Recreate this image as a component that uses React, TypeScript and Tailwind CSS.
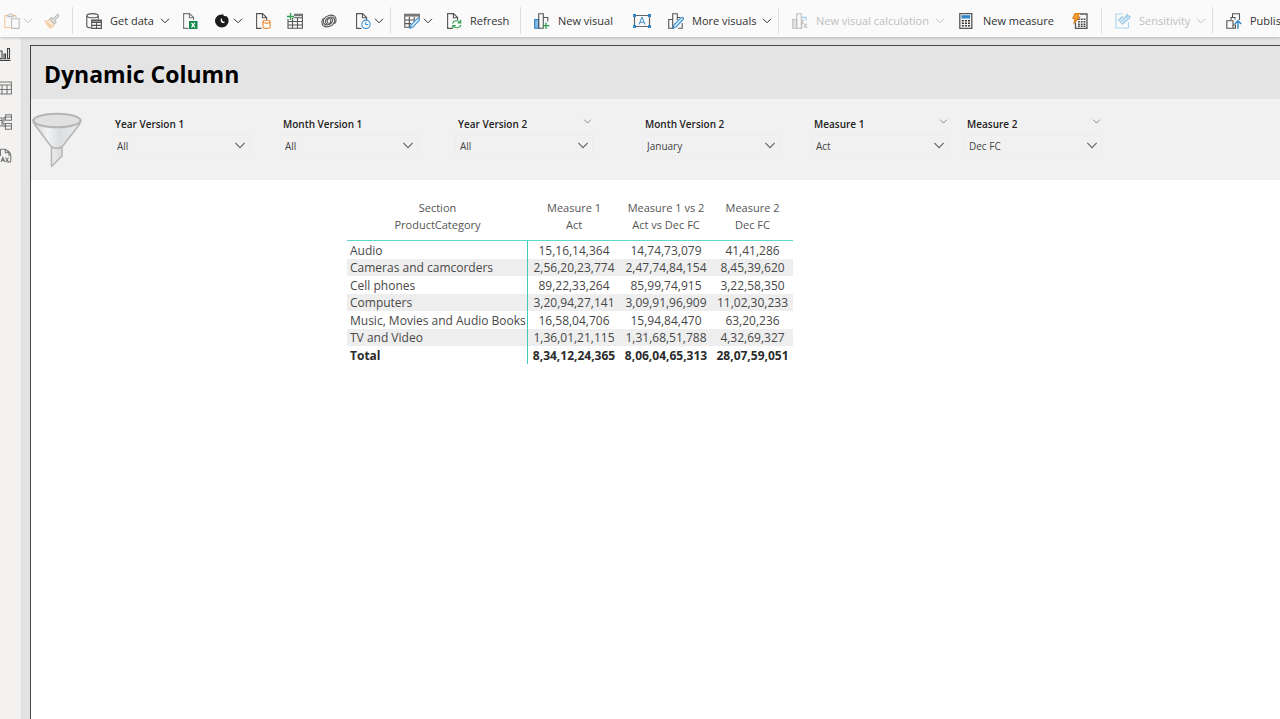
import { ReactNode } from "react";

type IconProps = {
    children: ReactNode;
    className?: string;
};

function Icon({ children, className = "" }: IconProps) {
    return (
        <svg
            viewBox="0 0 16 16"
            className={`h-4 w-4 shrink-0 ${className}`}
            fill="none"
            stroke="#555"
            strokeWidth="1.1"
            aria-hidden="true"
        >
            {children}
        </svg>
    );
}

function Chevron({ className = "h-[6px] w-[10px]" }: { className?: string }) {
    return (
        <svg
            viewBox="0 0 10 6"
            className={`shrink-0 ${className}`}
            fill="none"
            stroke="currentColor"
            aria-hidden="true"
        >
            <path d="M1 .8 5 4.8 9 .8" />
        </svg>
    );
}

const page = "M6.5 15.4H1.6V.6h6l4 4V7M7.4.8v4h4";

const PasteIcon = () => (
    <Icon className="opacity-60">
        <path d="M6.5 14.5H.8V2.6h3M9 2.6h3V5" stroke="#f0a860" />
        <path d="M3.8 3.6V2h1.4a1.3 1.3 0 0 1 2.6 0h1.4v1.6zM7.6 5.8h7.6v9.6H7.6z" stroke="#999" />
    </Icon>
);

const BrushIcon = () => (
    <Icon className="opacity-70">
        <path d="M1 8.2c2 .2 3.6-.5 5-2l4.6 4.6c-1 2-2.6 3.5-4.6 4.3zM3.5 10l4 3.5" stroke="#f0b070" fill="#fbe3c8" />
        <path d="m6 6.2 1.5-1.6 1.7 1.6L13.3 1.6q1.6-.3 1.4 1.4L10.6 7.4l1.5 1.6-1.5 1.7z" stroke="#999" />
    </Icon>
);

const DatabaseIcon = () => (
    <Icon>
        <ellipse cx="6.5" cy="2.7" rx="5.7" ry="2.1" />
        <path d="M.8 2.7v10c0 1.2 2 2 4.2 2.1M12.2 2.7v3.5" />
        <path d="M5.7 7.1h9.7v8.3H5.7zM5.7 9.5h9.7M5.7 12.4h9.7M10.5 9.5v6" />
        <path d="M5.7 7.8h9.7" strokeWidth="1.6" />
    </Icon>
);

const ExcelIcon = () => (
    <Icon>
        <path d={page} stroke="#777" />
        <path d="M7 8h8.5v8H7z" fill="#14874a" stroke="none" />
        <path d="m9.5 9.8 3.4 4.5m0-4.5-3.4 4.5" stroke="#fff" strokeWidth="1.3" />
    </Icon>
);

const OneLakeIcon = () => (
    <Icon>
        <path
            d="M1 8c0-4.500 4.500-7.800 9-6.200l-.6 1.300 3.300.2C14 4.500 14.600 6 14.600 8a6.800 6.500 0 0 1-13.600 0z"
            fill="#1c1c1c"
            stroke="none"
        />
        <path d="M7.300 5C6.300 6.500 6.400 9.300 8.700 10c1.200.2 2-.3 2.300-1.200-1.700.1-3-.8-3-2.300z" fill="#fff" stroke="none" />
    </Icon>
);

const SqlIcon = () => (
    <Icon>
        <path d={page} />
        <path d="M8 8.7v5.500c0 1.500 7 1.500 7 0V8.700" fill="#fff" stroke="#e8872f" />
        <ellipse cx="11.5" cy="8.7" rx="3.5" ry="1.4" fill="#fff" stroke="#e8872f" />
    </Icon>
);

const EnterDataIcon = () => (
    <Icon>
        <path d="M1 6v9.300h14.400V1.200H7M1 8.500h14.400M1 12h14.400M5.500 5v10.300M10.500 5v10.300M6.500 4.800h9" />
        <path d="M7 2.200h8.400" strokeWidth="2" stroke="#777" />
        <path d="M3.500 0v7M0 3.500h7" stroke="#2f9e4f" strokeWidth="1.3" />
    </Icon>
);

const DataverseIcon = () => (
    <Icon>
        <path d="M13.500 3.200C10.500 1 5 2.500 3 6c-1.700 3 0 6 3 6 3.500 0 5.800-2.600 5.500-5C11.200 5 9 4.400 7.500 5.600 6 7 5.600 9 7.200 9.800" />
        <path d="M2.500 12.800C5.500 15 11 13.500 13 10c1.700-3 0-6-3-6-3.500 0-5.800 2.600-5.500 5 .3 2 2.500 2.600 4 1.400C10 9 10.400 7 8.800 6.200" />
        <path d="M2.500 12.800C.500 11 .3 7.500 2.500 5M13.500 3.200c2 1.800 2.200 5.300 0 7.800" />
    </Icon>
);

const RecentIcon = () => (
    <Icon>
        <path d={page} />
        <circle cx="11" cy="11.3" r="4.2" fill="#fff" stroke="#3a8fd0" />
        <path d="M10.800 8.800v2.700h2.400" stroke="#3a8fd0" />
    </Icon>
);

const TransformIcon = () => (
    <Icon>
        <path d="M6 14.300H.8V1.200h14.400V5M.8 7h10M.8 10.600H7M5.300 4v10.300M10.300 4v4" />
        <path d="M.8 2.500h14.400" strokeWidth="2.2" stroke="#777" />
        <path d="m6 15.200 1-3.300 6.700-6.700q1.800-.3 1.800 1.800L9 14z" fill="#d8ecfa" stroke="#3a8fd0" />
    </Icon>
);

const RefreshIcon = () => (
    <Icon>
        <path d={page} />
        <path
            d="M6.500 10.500c.8-3 5.500-3.800 7.800-1M14.700 6.800v3.100h-3M15 12c-.8 3-5.500 3.800-7.800 1M6.800 15.700v-3.100h3"
            stroke="#2f9e4f"
        />
    </Icon>
);

const NewVisualIcon = () => (
    <Icon>
        <path d="M.7 6.500h4v8.700h-4z" fill="#7dbcec" stroke="#2f7fc0" />
        <path d="M4.700 15.200V.8h4.600v14.400zM9.300 4.500h4.500v4" />
        <path d="M12 9.500v6.500M8.800 12.700h6.500" stroke="#2f9e4f" strokeWidth="1.3" />
    </Icon>
);

const TextBoxIcon = () => (
    <svg viewBox="0 0 18 16" className="h-4 w-[18px] shrink-0" fill="none" aria-hidden="true">
        <path d="M1.500 2.500h15v11h-15z" stroke="#666" strokeWidth="1.2" />
        <path d="m6 11.500 3-7.500 3 7.500M7 9.200h4" stroke="#3a8fd0" />
        <path d="M0 1h3v3H0zM15 1h3v3h-3zM0 12h3v3H0zM15 12h3v3h-3z" fill="#2d86c9" />
    </svg>
);

const MoreVisualsIcon = () => (
    <Icon>
        <path d="M4.700 15.200h-4V6.500h4M6 15.200H4.700V.8h4.600V7M9.300 4.500h3M14.200 10v5.200h-4" />
        <path d="m5 15 1.200-3.500 7.500-7.300q2-.2 1.800 1.800L8.300 13.700z" fill="#d8ecfa" stroke="#3a8fd0" />
    </Icon>
);

const VisualCalcIcon = () => (
    <Icon>
        <path d="M.7 6.500h4v8.700h-4z" fill="#e4e4e4" stroke="#c0c0c0" />
        <path d="M4.700 15.200V.8h4.600v14.400z" stroke="#bdbdbd" />
        <path d="M9.300 4.500H14v3" stroke="#a8d0ee" strokeWidth="1.4" />
        <path
            d="M12 7c-2-.5-1.500 2-2.500 8.500-.3.500-1 .5-1.500.3M8.800 10h2.800M12 10.500l3 4.500m0-4.500-3.200 4.500"
            stroke="#bdbdbd"
        />
    </Icon>
);

const CalculatorIcon = () => (
    <Icon>
        <path d="M.8.700h12v14.600h-12z" strokeWidth="1.3" />
        <path d="M3 2.700h7.600v2.200H3z" fill="#2d86c9" stroke="#2d86c9" />
        <path
            d="M2.800 7.800h8.200M2.800 10.300h8.200M2.800 12.800h8.200"
            stroke="#333"
            strokeWidth="1.5"
            strokeDasharray="2 1.1"
        />
    </Icon>
);

const QuickMeasureIcon = () => (
    <Icon>
        <path d="M8 1h7v14.300H3.500V9.500" strokeWidth="1.3" />
        <path
            d="M6 6.300h7.500M6 8.800h7.500M6 11.200h7.500M6 13.300h7.500"
            stroke="#444"
            strokeWidth="1.5"
            strokeDasharray="1.8 1"
        />
        <path d="M3 .500h4.500L5.500 4h2.200L2 10l1-4.500H.8z" fill="#f5a133" stroke="#dd7a1c" />
    </Icon>
);

const SensitivityIcon = () => (
    <Icon className="opacity-60">
        <path d="M8 1H1v14h12.500V9" stroke="#7ab8e0" />
        <path
            d="M3.500 7 7.700 11.200 11 8 6.800 3.800zM5.200 5.400l4.200 4.300M8.500 5.300l3.700-3.800 3 3-3.800 3.700M10.300 3.600l3 3M12 .8v2.600h3.500"
            stroke="#6aaedc"
            fill="#dceefa"
        />
    </Icon>
);

const PublishIcon = () => (
    <Icon>
        <path d="M5 7V4.500h4v2M6.500 4.500V.8h7V7M5 15.200H.8V7.700H7v7.500zM7 12h2.500v3.200H5" />
        <path d="M12 15.700V8M8.800 11 12 7.800l3.200 3.200" stroke="#2d86c9" strokeWidth="1.4" />
    </Icon>
);

type ToolProps = {
    icon: ReactNode;
    name: string;
    width: string;
    text?: boolean;
    menu?: boolean;
    disabled?: boolean;
};

function Tool({ icon, name, width, text, menu, disabled }: ToolProps) {
    return (
        <button
            type="button"
            aria-label={name}
            disabled={disabled}
            className={`flex h-full shrink-0 items-center whitespace-nowrap text-[#333] disabled:text-[#c0c0c0] ${width}`}
        >
            {icon}
            {text && <span className="ml-2 pt-px">{name}</span>}
            {menu && <Chevron className={`h-[6px] w-[10px] ${text ? "ml-1.5" : "ml-[3px]"}`} />}
        </button>
    );
}

function Divider() {
    return <span className="mr-[13px] h-[27px] w-px shrink-0 bg-[#dedede]" />;
}

function Toolbar() {
    return (
        <header className="relative z-10 flex h-[37px] items-center overflow-hidden bg-[#fafafa] pt-1 pl-1 text-[11px] shadow-[0_1px_3px_#bbb]">
            <Tool icon={<PasteIcon />} name="Paste" width="w-10" menu disabled />
            <Tool icon={<BrushIcon />} name="Format painter" width="w-7" disabled />
            <Divider />
            <Tool icon={<DatabaseIcon />} name="Get data" width="w-24" text menu />
            <Tool icon={<ExcelIcon />} name="Excel workbook" width="w-8" />
            <Tool icon={<OneLakeIcon />} name="OneLake catalog" width="w-[41px]" menu />
            <Tool icon={<SqlIcon />} name="SQL Server" width="w-8" />
            <Tool icon={<EnterDataIcon />} name="Enter data" width="w-[34px]" />
            <Tool icon={<DataverseIcon />} name="Dataverse" width="w-[34px]" />
            <Tool icon={<RecentIcon />} name="Recent sources" width="w-[35px]" menu />
            <Divider />
            <Tool icon={<TransformIcon />} name="Transform data" width="w-[42px]" menu />
            <Tool icon={<RefreshIcon />} name="Refresh" width="w-[74px]" text />
            <Divider />
            <Tool icon={<NewVisualIcon />} name="New visual" width="w-[99px]" text />
            <Tool icon={<TextBoxIcon />} name="Text box" width="w-[35px]" />
            <Tool icon={<MoreVisualsIcon />} name="More visuals" width="w-[110px]" text menu />
            <Divider />
            <Tool icon={<VisualCalcIcon />} name="New visual calculation" width="w-[167px]" text menu disabled />
            <Tool icon={<CalculatorIcon />} name="New measure" width="w-[113px]" text />
            <Tool icon={<QuickMeasureIcon />} name="Quick measure" width="w-[29px]" />
            <Divider />
            <Tool icon={<SensitivityIcon />} name="Sensitivity" width="w-[97px]" text menu disabled />
            <Divider />
            <Tool icon={<PublishIcon />} name="Publish" width="w-20" text />
        </header>
    );
}

const views = [
    {
        name: "Report view",
        icon: (
            <Icon>
                <path
                    d="M0 14.400h14.500M3.500 12.500V5h2.500v7.500zM8 12.500V8h1.500v4.500zM11.500 12.500V2.500h2v10z"
                    stroke="#444"
                />
            </Icon>
        ),
    },
    {
        name: "Table view",
        icon: (
            <Icon>
                <path d="M1 2h14.400v12H1zM1 5h14.400M1 9.500h14.400M6 5v9M11 5v9" stroke="#777" />
            </Icon>
        ),
    },
    {
        name: "Model view",
        icon: (
            <Icon>
                <path
                    d="M1 4h5v8H1zM1 6.500h5M9.500.8h6v5.500h-6zM9.500 3h6M9.500 9.500h6v5.700h-6zM9.500 12h6M6 7h2V3.500h1.500M6 9h2v3.500h1.500"
                    stroke="#777"
                />
            </Icon>
        ),
    },
    {
        name: "DAX query view",
        icon: (
            <Icon>
                <path d="M4.500 8V1.200h5L13 4.500V8M9.300 1.400v3.300h3.500M11 2.500c3.500 1 4.500 5 3.500 11.500H11" stroke="#777" />
                <path d="M5 14l1.800-4.500L8.600 14M5.600 12.500H8M9.500 9.500l3 4.500m0-4.500-3 4.500M2 9.500V14" stroke="#777" />
            </Icon>
        ),
    },
];

function ViewRail() {
    return (
        <nav className="w-[22px] shrink-0 overflow-hidden border-r border-[#dcdcdc] bg-[#f3f2f0]">
            {views.map((view) => (
                <button key={view.name} type="button" aria-label={view.name} className="-ml-1 flex h-[34px] items-center">
                    {view.icon}
                </button>
            ))}
        </nav>
    );
}

function Funnel() {
    return (
        <svg
            viewBox="0 0 50 56"
            className="mt-[13px] ml-px h-14 w-[50px] shrink-0"
            stroke="#b5b5b5"
            strokeWidth="1.5"
            aria-hidden="true"
        >
            <defs>
                <linearGradient id="cone" x1="0" x2="1">
                    <stop offset="0" stopColor="#d2d3d5" />
                    <stop offset=".3" stopColor="#f2f3f4" />
                    <stop offset=".55" stopColor="#dcdee0" />
                    <stop offset="1" stopColor="#ececed" />
                </linearGradient>
            </defs>
            <path
                d="M1 8c0 2 1 4 2 5l16.500 22v19.500L30 44V35L47 13c1-1.500 2-3 2-5z"
                fill="url(#cone)"
                strokeLinejoin="round"
            />
            <path d="M19.500 35c3 1.500 8 1.500 10.500 0" fill="none" />
            <ellipse cx="25" cy="8.500" rx="23.500" ry="6.700" fill="#dfe1e3" strokeWidth="2" />
        </svg>
    );
}

type SlicerProps = {
    title: string;
    value: string;
    spacing: string;
    collapsible?: boolean;
};

function Slicer({ title, value, spacing, collapsible }: SlicerProps) {
    const id = title.toLowerCase().replaceAll(" ", "-");

    return (
        <div className={`w-[138px] shrink-0 pt-4 ${spacing}`}>
            <div className="flex h-5 justify-between pr-px pl-[3px]">
                <label htmlFor={id} className="text-[10px] leading-[18px] font-semibold text-[#222]">
                    {title}
                </label>
                {collapsible && (
                    <button type="button" aria-label={`Collapse ${title}`} className="flex h-3 items-center text-[#777]">
                        <Chevron className="h-[5px] w-[9px]" />
                    </button>
                )}
            </div>
            <div className="relative text-[#666]">
                <select
                    id={id}
                    defaultValue={value}
                    className="block h-[21px] w-full appearance-none border border-[#ededed] bg-transparent pt-px pl-1 text-[10px] text-[#444]"
                >
                    <option>{value}</option>
                </select>
                <Chevron className="pointer-events-none absolute top-[7px] right-1 h-[7px] w-3" />
            </div>
        </div>
    );
}

const rows = [
    ["Audio", "15,16,14,364", "14,74,73,079", "41,41,286"],
    ["Cameras and camcorders", "2,56,20,23,774", "2,47,74,84,154", "8,45,39,620"],
    ["Cell phones", "89,22,33,264", "85,99,74,915", "3,22,58,350"],
    ["Computers", "3,20,94,27,141", "3,09,91,96,909", "11,02,30,233"],
    ["Music, Movies and Audio Books", "16,58,04,706", "15,94,84,470", "63,20,236"],
    ["TV and Video", "1,36,01,21,115", "1,31,68,51,788", "4,32,69,327"],
    ["Total", "8,34,12,24,365", "8,06,04,65,313", "28,07,59,051"],
];

function Matrix() {
    return (
        <table className="mt-[19px] ml-[316px] w-[446px] table-fixed border-separate border-spacing-0 text-center text-[12px] leading-[17px] whitespace-nowrap text-[#484848]">
            <colgroup>
                <col className="w-[181px]" />
                <col className="w-[92px]" />
                <col className="w-[92px]" />
                <col className="w-[81px]" />
            </colgroup>
            <thead className="text-[11px] text-[#555]">
                <tr>
                    <th className="font-normal">Section</th>
                    <th className="font-normal">Measure 1</th>
                    <th className="font-normal">Measure 1 vs 2</th>
                    <th className="font-normal">Measure 2</th>
                </tr>
                <tr>
                    <th className="border-b border-[#5fd8cc] pb-[7px] font-normal">ProductCategory</th>
                    <th className="border-b border-[#5fd8cc] pb-[7px] font-normal">Act</th>
                    <th className="border-b border-[#5fd8cc] pb-[7px] font-normal">Act vs Dec FC</th>
                    <th className="border-b border-[#5fd8cc] pb-[7px] font-normal">Dec FC</th>
                </tr>
            </thead>
            <tbody>
                {rows.map(([category, ...values]) => (
                    <tr
                        key={category}
                        className="group h-[18px] last:font-bold last:text-[#2b2b2b] even:h-[17px] even:bg-[#eeeeee]"
                    >
                        <th
                            scope="row"
                            className="border-r border-[#3fcabc] pl-[3px] text-left font-normal group-last:font-bold"
                        >
                            {category}
                        </th>
                        {values.map((value) => (
                            <td key={value}>{value}</td>
                        ))}
                    </tr>
                ))}
            </tbody>
        </table>
    );
}

export default function App() {
    return (
        <div className="flex h-screen flex-col overflow-hidden bg-[#e3e3e3] font-['Open_Sans','Noto_Sans',sans-serif]">
            <Toolbar />
            <div className="flex min-h-0 grow">
                <ViewRail />
                <main className="mt-2 ml-2 grow overflow-hidden border-t border-l border-[#444] bg-white">
                    <h1 className="h-[53px] bg-[#e4e4e4] pl-[13px] text-[23px] leading-[56px] font-bold text-black">
                        Dynamic Column
                    </h1>
                    <section className="flex h-[81px] bg-[#f1f1f1]">
                        <Funnel />
                        <Slicer title="Year Version 1" value="All" spacing="ml-[30px]" />
                        <Slicer title="Month Version 1" value="All" spacing="ml-[30px]" />
                        <Slicer title="Year Version 2" value="All" spacing="ml-[37px]" collapsible />
                        <Slicer title="Month Version 2" value="January" spacing="ml-[49px]" />
                        <Slicer title="Measure 1" value="Act" spacing="ml-[31px]" collapsible />
                        <Slicer title="Measure 2" value="Dec FC" spacing="ml-[15px]" collapsible />
                    </section>
                    <Matrix />
                </main>
            </div>
        </div>
    );
}
